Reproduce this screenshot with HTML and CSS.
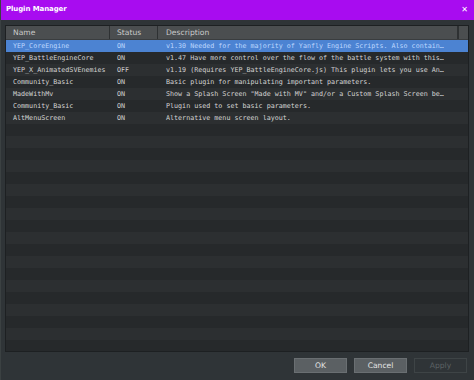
FILE: index.html
```html
<!DOCTYPE html>
<html lang="en">
<head>
    <meta charset="UTF-8">
    <title>Plugin Manager</title>
    <link rel="stylesheet" href="styles.css">
</head>
<body>
    <div class="window">
        <div class="titlebar">
            <span class="title">Plugin Manager</span>
            <span class="close">&#x2715;</span>
        </div>
        <div class="content">
            <div class="list">
                <div class="head">
                    <div class="col name">Name</div>
                    <div class="col status">Status</div>
                    <div class="col desc">Description</div>
                    <div class="col scroll"></div>
                </div>
                <div class="rows">
                    <div class="row selected">
                        <div class="col name">YEP_CoreEngine</div>
                        <div class="col status">ON</div>
                        <div class="col desc">v1.30 Needed for the majority of Yanfly Engine Scripts. Also contain…</div>
                    </div>
                    <div class="row">
                        <div class="col name">YEP_BattleEngineCore</div>
                        <div class="col status">ON</div>
                        <div class="col desc">v1.47 Have more control over the flow of the battle system with this…</div>
                    </div>
                    <div class="row">
                        <div class="col name">YEP_X_AnimatedSVEnemies</div>
                        <div class="col status">OFF</div>
                        <div class="col desc">v1.19 (Requires YEP_BattleEngineCore.js) This plugin lets you use An…</div>
                    </div>
                    <div class="row">
                        <div class="col name">Community_Basic</div>
                        <div class="col status">ON</div>
                        <div class="col desc">Basic plugin for manipulating important parameters.</div>
                    </div>
                    <div class="row">
                        <div class="col name">MadeWithMv</div>
                        <div class="col status">ON</div>
                        <div class="col desc">Show a Splash Screen "Made with MV" and/or a Custom Splash Screen be…</div>
                    </div>
                    <div class="row">
                        <div class="col name">Community_Basic</div>
                        <div class="col status">ON</div>
                        <div class="col desc">Plugin used to set basic parameters.</div>
                    </div>
                    <div class="row">
                        <div class="col name">AltMenuScreen</div>
                        <div class="col status">ON</div>
                        <div class="col desc">Alternative menu screen layout.</div>
                    </div>
                </div>
            </div>
            <div class="buttons">
                <button class="btn">OK</button>
                <button class="btn">Cancel</button>
                <button class="btn" disabled>Apply</button>
            </div>
        </div>
    </div>
</body>
</html>
```

FILE: styles.css
```css
body {
    margin: 0;
    background-color: #2f3437;
    font-family: "DejaVu Sans", sans-serif;
}
.window {
    width: 474px;
    height: 380px;
    display: flex;
    flex-direction: column;
    background-color: #2f3437;
    border-left: 1px solid #3b4142;
    box-sizing: border-box;
}
.titlebar {
    height: 18px;
    background-color: #a80cf0;
    display: flex;
    align-items: center;
    justify-content: space-between;
    padding: 0 6px 2px 5px;
    color: #fff;
}
.title {
    font-size: 7px;
    font-weight: bold;
    letter-spacing: -0.1px;
}
.close {
    font-size: 8px;
}
.content {
    flex: 1;
    display: flex;
    flex-direction: column;
    padding: 5px 5px 7px 4px;
}
.list {
    flex: 1;
    border: 1px solid #1d2022;
    display: flex;
    flex-direction: column;
    overflow: hidden;
}
.head {
    display: flex;
    height: 13px;
    background-color: #4b4e50;
    border-bottom: 1px solid #3a3d3f;
    color: #c9c9c9;
    font-size: 7.6px;
    line-height: 13px;
}
.head .col {
    border-right: 1px solid #2e3133;
    box-sizing: border-box;
}
.head .scroll {
    border-right: none;
    border-left: 1px solid #2e3133;
    flex: 1;
}
.col {
    white-space: nowrap;
}
.name {
    width: 104px;
    padding-left: 7px;
    box-sizing: border-box;
}
.status {
    width: 48px;
    padding-left: 7px;
    box-sizing: border-box;
}
.desc {
    width: 300px;
    padding-left: 8px;
    box-sizing: border-box;
}
.row .desc {
    flex: 1;
}
.rows {
    flex: 1;
    background: repeating-linear-gradient(#2c2f31 0 12px, #26292b 12px 24px);
}
.row {
    display: flex;
    height: 12px;
    line-height: 12px;
    font-family: "DejaVu Sans Mono", monospace;
    font-size: 6.7px;
    color: #d4d4d4;
}
.row.selected {
    background-color: #4c83d2;
    color: #bed8ff;
}
.buttons {
    display: flex;
    justify-content: flex-end;
    gap: 7px;
    padding-top: 6px;
    padding-right: 2px;
}
.btn {
    width: 53px;
    height: 15px;
    padding: 0;
    font-family: "DejaVu Sans", sans-serif;
    font-size: 7.6px;
    color: #e6e6e6;
    background-color: #5b6063;
    border: 1px solid #6a6f72;
    border-radius: 0;
}
.btn:disabled {
    color: #5b6163;
    background-color: #2f3437;
    border-color: #3e4446;
}
```
